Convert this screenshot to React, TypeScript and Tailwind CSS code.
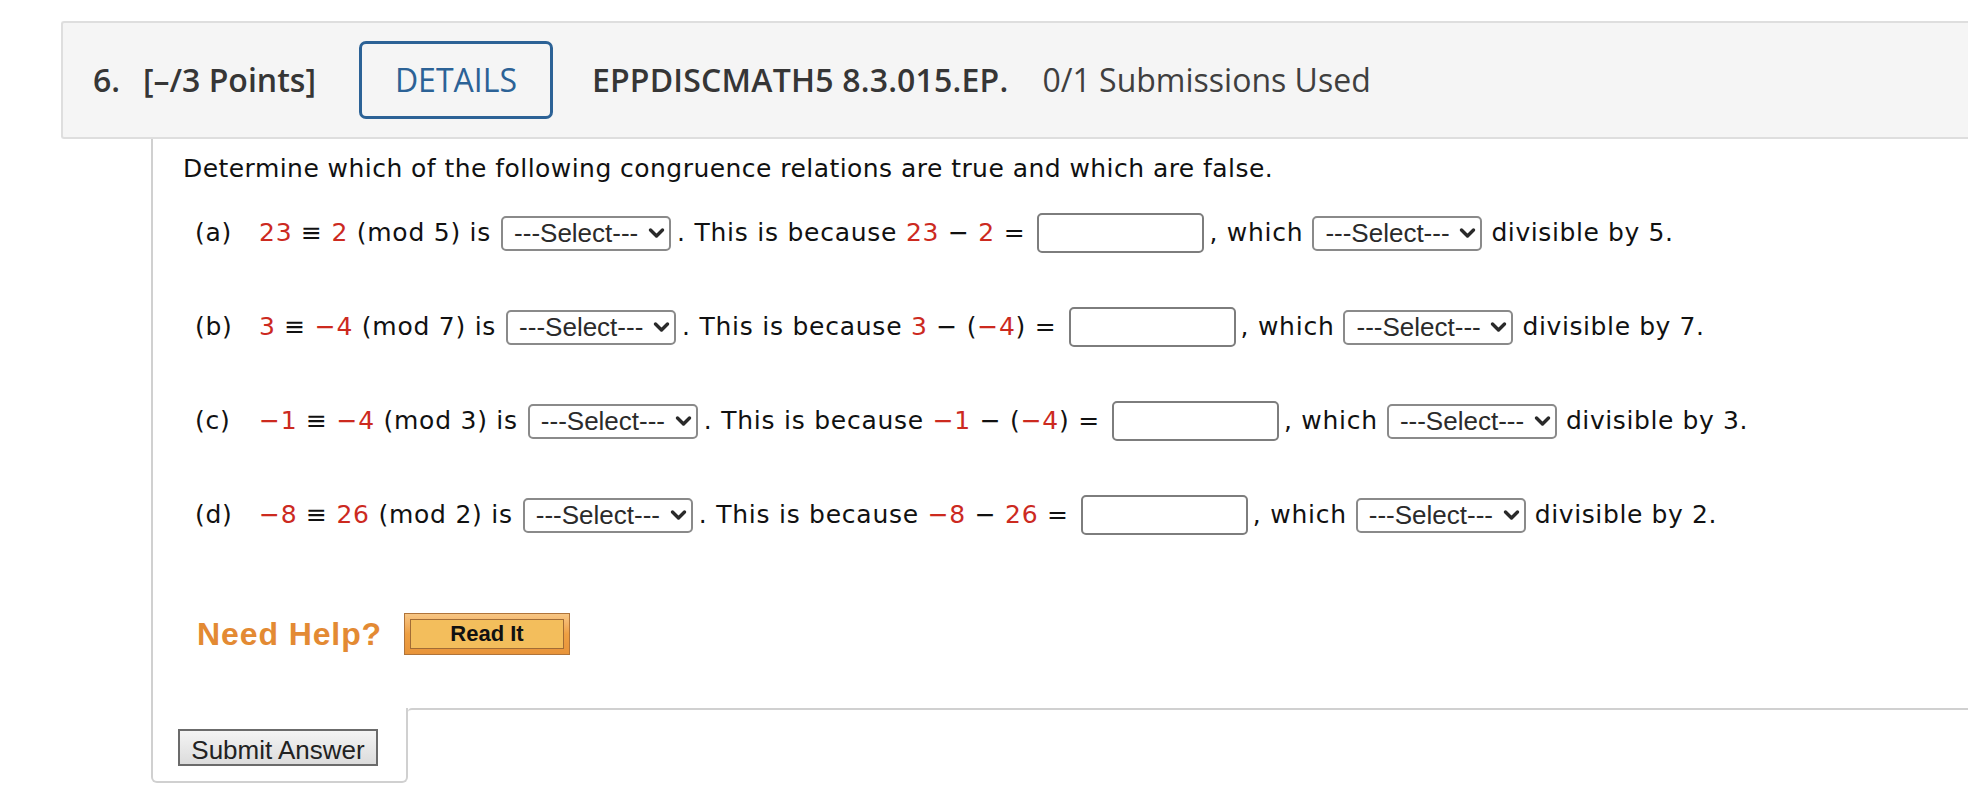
import React from "react"

const red = "text-[#cc2a1f]"

function Chevron() {
  return (
    <svg
      className="pointer-events-none absolute right-[6px] top-1/2 -translate-y-1/2"
      width="17"
      height="11"
      viewBox="0 0 17 11"
    >
      <path d="M2.5 2.5 L8.5 8.5 L14.5 2.5" fill="none" stroke="#2a2a2a" strokeWidth="3.4" strokeLinecap="round" strokeLinejoin="round" />
    </svg>
  )
}

function Select({ className = "" }: { className?: string }) {
  return (
    <span className={`relative inline-flex ${className}`}>
      <select
        defaultValue=""
        className="h-[35px] w-[170px] appearance-none rounded-[5px] border-2 border-[#8a8a8a] bg-white pl-[11px] text-[26px] leading-none tracking-normal text-[#2b2b2b] outline-none [font-family:'Liberation_Sans',Arial,sans-serif]"
      >
        <option value="">---Select---</option>
        <option value="is">is</option>
        <option value="not">is not</option>
      </select>
      <Chevron />
    </span>
  )
}

function Blank({ className = "" }: { className?: string }) {
  return (
    <input
      type="text"
      className={`h-[40px] w-[167px] rounded-[5px] border-2 border-[#7d7d7d] bg-white px-2 text-[22px] outline-none ${className}`}
    />
  )
}

type Part = { t: string; red?: boolean }

function Txt({ parts }: { parts: Part[] }) {
  return (
    <span className="whitespace-pre">
      {parts.map((p, i) => (
        <span key={i} className={p.red ? red : ""}>
          {p.t}
        </span>
      ))}
    </span>
  )
}

type Row = { label: string; lhs: Part[]; diff: Part[]; n: string }

const rows: Row[] = [
  {
    label: "(a)",
    lhs: [{ t: "23", red: true }, { t: " ≡ " }, { t: "2", red: true }, { t: " (mod 5) is" }],
    diff: [{ t: ". This is because " }, { t: "23", red: true }, { t: " − " }, { t: "2", red: true }, { t: " =" }],
    n: "5",
  },
  {
    label: "(b)",
    lhs: [{ t: "3", red: true }, { t: " ≡ " }, { t: "−4", red: true }, { t: " (mod 7) is" }],
    diff: [{ t: ". This is because " }, { t: "3", red: true }, { t: " − (" }, { t: "−4", red: true }, { t: ") =" }],
    n: "7",
  },
  {
    label: "(c)",
    lhs: [{ t: "−1", red: true }, { t: " ≡ " }, { t: "−4", red: true }, { t: " (mod 3) is" }],
    diff: [{ t: ". This is because " }, { t: "−1", red: true }, { t: " − (" }, { t: "−4", red: true }, { t: ") =" }],
    n: "3",
  },
  {
    label: "(d)",
    lhs: [{ t: "−8", red: true }, { t: " ≡ " }, { t: "26", red: true }, { t: " (mod 2) is" }],
    diff: [{ t: ". This is because " }, { t: "−8", red: true }, { t: " − " }, { t: "26", red: true }, { t: " =" }],
    n: "2",
  },
]

export default function App() {
  return (
    <div className="min-h-[796px] w-full bg-white pt-[21px] text-[#111]">
      {/* question header */}
      <div className="ml-[61px] flex h-[118px] items-center rounded-l-[3px] border-2 border-r-0 border-[#dedede] bg-[#f5f5f5] pl-[30px] text-[32px] text-[#363636] [font-family:'Open_Sans',sans-serif]">
        <span className="font-semibold">6.</span>
        <span className="ml-[23px] font-semibold">[–/3 Points]</span>
        <button className="ml-[43px] flex h-[78px] w-[194px] items-center justify-center rounded-[7px] border-[3px] border-[#2c6296] text-[32px] font-medium text-[#2c6296]">
          DETAILS
        </button>
        <span className="ml-[39px] font-semibold tracking-[0.2px]">EPPDISCMATH5 8.3.015.EP.</span>
        <span className="ml-[34px] text-[#3f3f3f]">0/1 Submissions Used</span>
      </div>

      {/* question body */}
      <div className="ml-[151px] [font-family:'DejaVu_Sans',Verdana,sans-serif]">
        <div className="border-l-2 border-[#d0d0d0] pb-[53px] pl-[30px] pt-[16px] text-[25px] leading-[28px]">
          <p className="tracking-[0.45px]">Determine which of the following congruence relations are true and which are false.</p>

          <div className="mt-[30px] flex flex-col gap-[54px] pl-[12px] tracking-[0.75px]">
            {rows.map((r) => (
              <div key={r.label} className="flex h-[40px] items-center">
                <span className="w-[64px]">{r.label}</span>
                <Txt parts={r.lhs} />
                <Select className="ml-[10px] mr-[6px]" />
                <Txt parts={r.diff} />
                <Blank className="ml-[12px] mr-[5px]" />
                <span>, which</span>
                <Select className="ml-[9px] mr-[9px]" />
                <span className="tracking-[0.6px]">divisible by {r.n}.</span>
              </div>
            ))}
          </div>

          <div className="mt-[78px] flex h-[42px] items-center pl-[14px] tracking-normal [font-family:'Liberation_Sans',Arial,sans-serif]">
            <span className="text-[32px] font-bold tracking-[0.9px] text-[#e38a33]">Need Help?</span>
            <button className="ml-[22px] flex h-[42px] w-[166px] items-center justify-center border border-[#b0743a] bg-linear-to-b from-[#f7c684] via-[#eea043] to-[#e8943a] p-[5px]">
              <span className="flex h-full w-full items-center justify-center border border-[#a26c35] bg-[#f3be5c] text-[22px] font-bold text-[#111]">
                Read It
              </span>
            </button>
          </div>
        </div>

        <div className="flex">
          <div className="w-[257px] rounded-b-[6px] border-2 border-t-0 border-[#d0d0d0] pb-[15px] pl-[25px] pt-[21px]">
            <button className="h-[37px] w-[200px] border-2 border-[#6b6b6b] bg-linear-to-b from-[#f4f4f4] to-[#dcdcdc] text-[26px] text-[#222] [font-family:'Liberation_Sans',Arial,sans-serif]">
              Submit Answer
            </button>
          </div>
          <div className="flex-1 rounded-tl-[4px] border-t-2 border-[#d0d0d0]" />
        </div>
      </div>
    </div>
  )
}
